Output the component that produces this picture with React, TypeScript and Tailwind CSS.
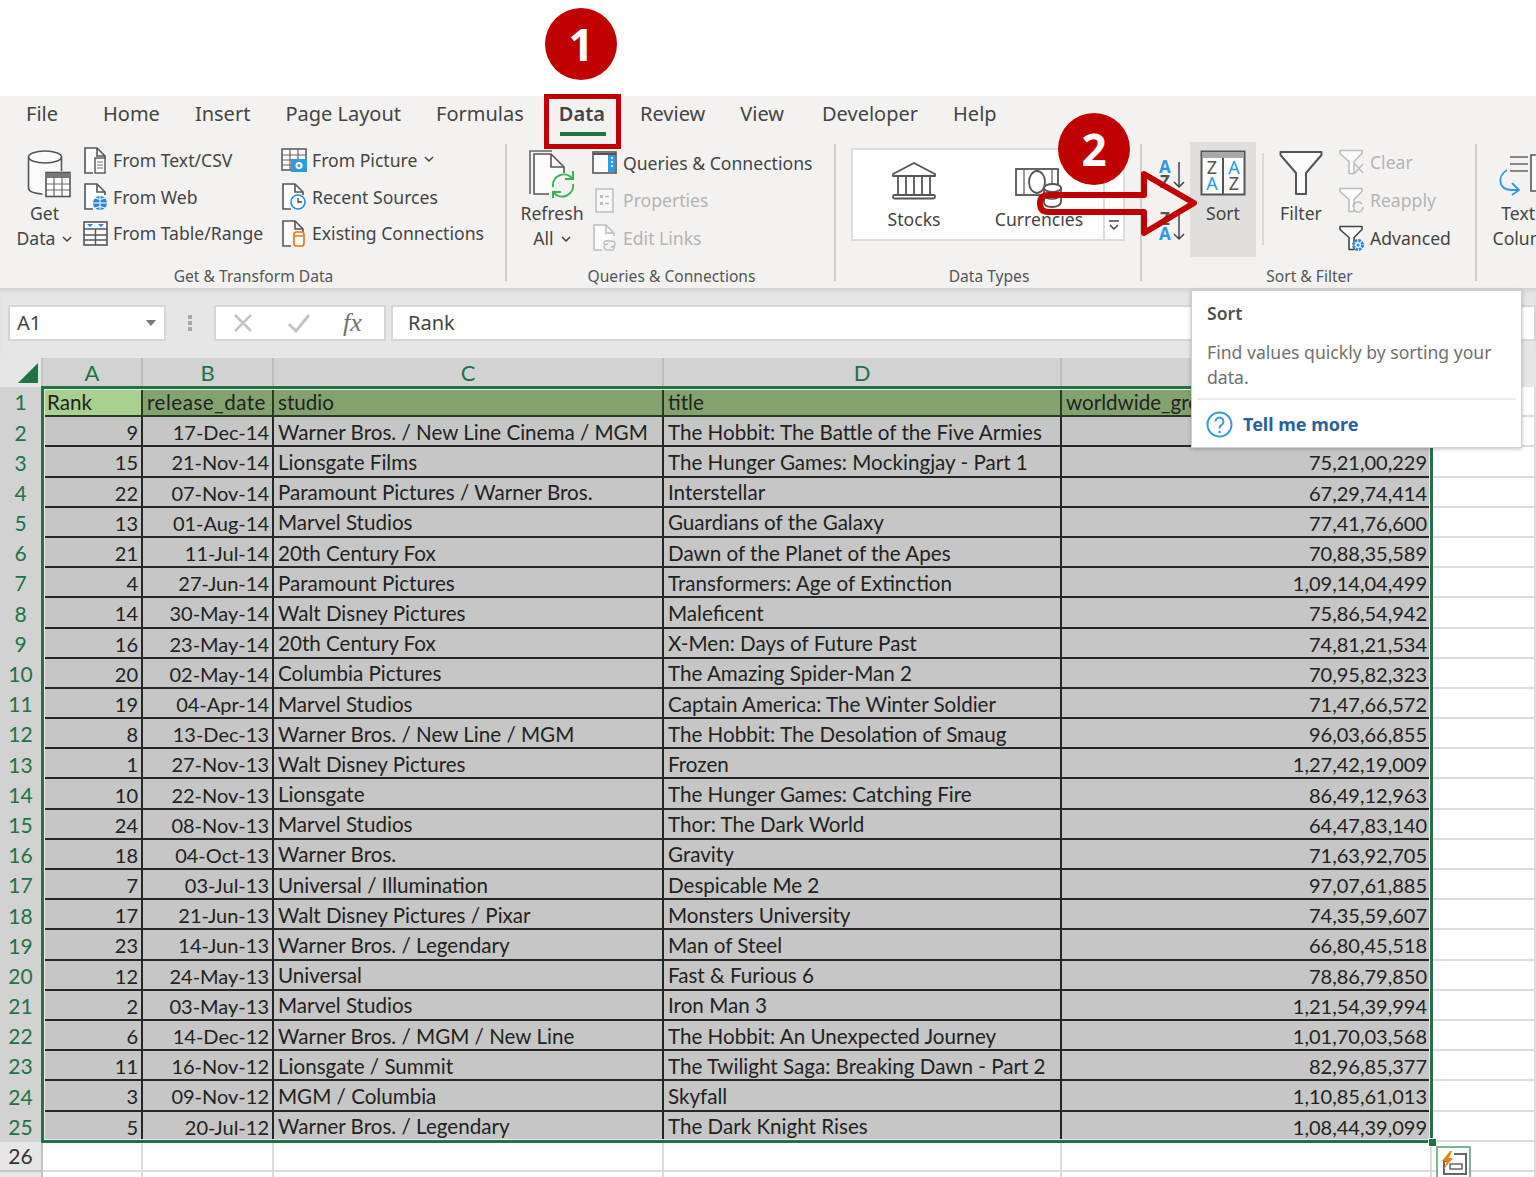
import type { ReactNode } from 'react'

const rows: [number, string, string, string, string][] = [
  [9, '17-Dec-14', 'Warner Bros. / New Line Cinema / MGM', 'The Hobbit: The Battle of the Five Armies', '95,60,19,788'],
  [15, '21-Nov-14', 'Lionsgate Films', 'The Hunger Games: Mockingjay - Part 1', '75,21,00,229'],
  [22, '07-Nov-14', 'Paramount Pictures / Warner Bros.', 'Interstellar', '67,29,74,414'],
  [13, '01-Aug-14', 'Marvel Studios', 'Guardians of the Galaxy', '77,41,76,600'],
  [21, '11-Jul-14', '20th Century Fox', 'Dawn of the Planet of the Apes', '70,88,35,589'],
  [4, '27-Jun-14', 'Paramount Pictures', 'Transformers: Age of Extinction', '1,09,14,04,499'],
  [14, '30-May-14', 'Walt Disney Pictures', 'Maleficent', '75,86,54,942'],
  [16, '23-May-14', '20th Century Fox', 'X-Men: Days of Future Past', '74,81,21,534'],
  [20, '02-May-14', 'Columbia Pictures', 'The Amazing Spider-Man 2', '70,95,82,323'],
  [19, '04-Apr-14', 'Marvel Studios', 'Captain America: The Winter Soldier', '71,47,66,572'],
  [8, '13-Dec-13', 'Warner Bros. / New Line / MGM', 'The Hobbit: The Desolation of Smaug', '96,03,66,855'],
  [1, '27-Nov-13', 'Walt Disney Pictures', 'Frozen', '1,27,42,19,009'],
  [10, '22-Nov-13', 'Lionsgate', 'The Hunger Games: Catching Fire', '86,49,12,963'],
  [24, '08-Nov-13', 'Marvel Studios', 'Thor: The Dark World', '64,47,83,140'],
  [18, '04-Oct-13', 'Warner Bros.', 'Gravity', '71,63,92,705'],
  [7, '03-Jul-13', 'Universal / Illumination', 'Despicable Me 2', '97,07,61,885'],
  [17, '21-Jun-13', 'Walt Disney Pictures / Pixar', 'Monsters University', '74,35,59,607'],
  [23, '14-Jun-13', 'Warner Bros. / Legendary', 'Man of Steel', '66,80,45,518'],
  [12, '24-May-13', 'Universal', 'Fast & Furious 6', '78,86,79,850'],
  [2, '03-May-13', 'Marvel Studios', 'Iron Man 3', '1,21,54,39,994'],
  [6, '14-Dec-12', 'Warner Bros. / MGM / New Line', 'The Hobbit: An Unexpected Journey', '1,01,70,03,568'],
  [11, '16-Nov-12', 'Lionsgate / Summit', 'The Twilight Saga: Breaking Dawn - Part 2', '82,96,85,377'],
  [3, '09-Nov-12', 'MGM / Columbia', 'Skyfall', '1,10,85,61,013'],
  [5, '20-Jul-12', 'Warner Bros. / Legendary', 'The Dark Knight Rises', '1,08,44,39,099'],
]

const tabs = ['Home', 'Insert', 'Page Layout', 'Formulas', 'Data', 'Review', 'View', 'Developer', 'Help']

const cols = ['A', 'B', 'C', 'D', 'E']
const gridCols = 'grid grid-cols-[43px_100px_131px_390px_398px_370px_104px]'

function Chevron() {
  return (
    <svg width="10" height="6" viewBox="0 0 10 6" className="inline-block ml-[7px] mb-[3px]">
      <path d="M1 1l4 4 4-4" fill="none" stroke="#444" strokeWidth="1.5" />
    </svg>
  )
}

function Doc({ children, gray }: { children?: ReactNode; gray?: boolean }) {
  const c = gray ? '#bdbdbd' : '#555'
  return (
    <svg width="25" height="27" viewBox="0 0 25 27">
      <path d="M10 26H2V1h12l8 8v3" fill="#fbfbfb" stroke={c} strokeWidth="1.6" />
      <path d="M14 1v8h8" fill="none" stroke={c} strokeWidth="1.6" />
      {children}
    </svg>
  )
}

function GetDataIcon() {
  return (
    <svg width="44" height="48" viewBox="0 0 44 48" className="ml-[9px]">
      <path d="M1 7v31q0 5 14 6h4V22h15V7z" fill="#fbfbfb" />
      <ellipse cx="18" cy="7" rx="16.5" ry="6" fill="#fbfbfb" stroke="#555" strokeWidth="1.6" />
      <path d="M1.5 7v31q0 5 14 6M34.500 7v14" fill="none" stroke="#555" strokeWidth="1.6" />
      <rect x="19" y="22.500" width="24" height="24" fill="#fff" stroke="#555" strokeWidth="1.6" />
      <path d="M19 23h24v5H19z" fill="#777" />
      <path d="M27 28v18M35 28v18M19 34h24M19 40h24" stroke="#666" strokeWidth="1.2" />
    </svg>
  )
}

function TableRangeIcon() {
  return (
    <svg width="25" height="25" viewBox="0 0 25 25">
      <rect x="1" y="1" width="23" height="23" fill="#fbfbfb" stroke="#555" strokeWidth="1.6" />
      <path d="M1 8h23M1 14h23M1 19h23M12.500 8v16" stroke="#555" strokeWidth="1.4" />
      <path d="M4 3h6l-3 3zM15 3h6l-3 3z" fill="#2b88d8" />
    </svg>
  )
}

function PictureIcon() {
  return (
    <svg width="26" height="24" viewBox="0 0 26 24">
      <rect x="1" y="1" width="24" height="21" fill="#fbfbfb" stroke="#555" strokeWidth="1.5" />
      <path d="M1 7h24M1 12h24M1 17h9M9 1v21M17 1v10" stroke="#666" strokeWidth="1.2" />
      <rect x="10" y="11" width="16" height="13" fill="#2f9ae0" />
      <circle cx="18" cy="17.500" r="3.500" fill="#fff" />
      <circle cx="18" cy="17.500" r="1.500" fill="#2f9ae0" />
    </svg>
  )
}

function RefreshIcon() {
  return (
    <svg width="46" height="48" viewBox="0 0 46 48">
      <path d="M1 44V1h22" fill="none" stroke="#666" strokeWidth="1.600" />
      <path d="M20 44H5V4h17l13 13v6" fill="#fbfbfb" stroke="#555" strokeWidth="1.600" />
      <path d="M22 4v13h13" fill="none" stroke="#555" strokeWidth="1.600" />
      <path d="M24 37a11 11 0 0 1 19-9M44 34a11 11 0 0 1-19 9" fill="none" stroke="#3fae5a" strokeWidth="2" />
      <path d="M44 21v8h-8M24 49v-7h8" fill="none" stroke="#3fae5a" strokeWidth="2" />
    </svg>
  )
}

function StocksIcon() {
  return (
    <svg width="44" height="38" viewBox="0 0 44 38">
      <path d="M22 1L1 12v2h42v-2z" fill="#fff" stroke="#555" strokeWidth="1.800" strokeLinejoin="round" />
      <path d="M6 14v18M14 14v18M22 14v18M30 14v18M38 14v18" stroke="#555" strokeWidth="1.800" />
      <rect x="1" y="33" width="42" height="3.500" rx="1.500" fill="#fff" stroke="#555" strokeWidth="1.800" />
    </svg>
  )
}

function CurrencyIcon() {
  return (
    <svg width="48" height="40" viewBox="0 0 48 40">
      <rect x="1" y="1" width="42" height="26" fill="#fff" stroke="#555" strokeWidth="1.800" />
      <path d="M9 1v26M37 1v26" stroke="#555" strokeWidth="1.200" />
      <ellipse cx="22" cy="14" rx="8" ry="11" fill="none" stroke="#555" strokeWidth="1.800" />
      <path d="M29 20v14q0 5 8 5t9-5V20z" fill="#fff" stroke="#555" strokeWidth="1.800" />
      <ellipse cx="37.500" cy="20" rx="8.500" ry="4" fill="#fff" stroke="#555" strokeWidth="1.800" />
      <path d="M29 27q1 4 8 4t9-4" fill="none" stroke="#555" strokeWidth="1.500" />
    </svg>
  )
}

function SortSmall({ first, second }: { first: string; second: string }) {
  const top = first === 'A'
  return (
    <svg width="28" height="30" viewBox="0 0 28 30" className="overflow-visible">
      <text x="7" y="13" textAnchor="middle" fontSize="17" fontWeight="700" fill={top ? '#2f9ae0' : '#555'} fontFamily="Noto Sans">
        {first}
      </text>
      <text x="7" y="28" textAnchor="middle" fontSize="17" fontWeight="700" fill={top ? '#555' : '#2f9ae0'} fontFamily="Noto Sans">
        {second}
      </text>
      <path d="M21 2v25M16 22l5 5 5-5" fill="none" stroke="#444" strokeWidth="1.500" />
    </svg>
  )
}

function SortIcon() {
  const f = { fontSize: 18, fontFamily: 'Noto Sans', textAnchor: 'middle' as const }
  return (
    <svg width="46" height="46" viewBox="0 0 46 46">
      <rect x="1.500" y="1.500" width="43" height="43" fill="#fbfbfb" stroke="#555" strokeWidth="2" />
      <rect x="2" y="2" width="42" height="6" fill="#a8a8a8" />
      <path d="M23 8v36" stroke="#555" strokeWidth="2" />
      <text x="12" y="24" {...f} fill="#555">Z</text>
      <text x="12" y="40" {...f} fill="#2f9ae0">A</text>
      <text x="34" y="24" {...f} fill="#2f9ae0">A</text>
      <text x="34" y="40" {...f} fill="#555">Z</text>
    </svg>
  )
}

function FilterIcon() {
  return (
    <svg width="44" height="46" viewBox="0 0 44 46">
      <path d="M1.500 2h41v3L27 23v21H17V23L1.500 5z" fill="#fbfbfb" stroke="#555" strokeWidth="2" strokeLinejoin="round" />
    </svg>
  )
}

function SmallFunnel({ color, children }: { color: string; children?: ReactNode }) {
  return (
    <svg width="26" height="26" viewBox="0 0 26 26">
      <path d="M1 1.500h22v3l-8 8v12h-5v-12l-9-8z" fill="#fbfbfb" stroke={color} strokeWidth="1.600" strokeLinejoin="round" />
      {children}
    </svg>
  )
}

function TextColumnsIcon() {
  return (
    <svg width="46" height="42" viewBox="0 0 46 42">
      <path d="M12 3h18M12 10h18M12 17h18" stroke="#666" strokeWidth="1.600" />
      <path d="M33 1h13v36H33z" fill="#fbfbfb" stroke="#555" strokeWidth="1.600" />
      <path d="M9 16C-1 22 0 36 14 36h6M14 29l7 7-7 5" fill="none" stroke="#2f9ae0" strokeWidth="1.800" />
    </svg>
  )
}

function BigButton({ icon, lines, chevron, className }: { icon: ReactNode; lines: string[]; chevron?: boolean; className: string }) {
  return (
    <div className={`flex flex-col items-center pt-[12px] text-[17.600px] leading-[25px] text-[#444] ${className}`}>
      <div className="h-[53px] pt-[2px] flex items-start justify-center">{icon}</div>
      {lines.map((l, i) => (
        <div key={l} className="whitespace-nowrap">
          {l}
          {chevron && i === lines.length - 1 && <Chevron />}
        </div>
      ))}
    </div>
  )
}

function SmallItem({ icon, label, gray, width, chevron, rowClass }: { icon: ReactNode; label: string; gray?: boolean; width: string; chevron?: boolean; rowClass: string }) {
  return (
    <div className={`flex items-center whitespace-nowrap text-[17.600px] ${rowClass} ${gray ? 'text-[#b4b4b4]' : 'text-[#444]'}`}>
      <div className={`flex justify-start shrink-0 ${width}`}>{icon}</div>
      {label}
      {chevron && <Chevron />}
    </div>
  )
}

function Group({ label, className, children }: { label: string; className: string; children: ReactNode }) {
  return (
    <div className={`relative flex flex-col shrink-0 h-full ${className}`}>
      <div className="flex h-[129px] overflow-hidden">{children}</div>
      <div className="h-[23px] text-center text-[15.600px] leading-[23px] text-[#555]">{label}</div>
    </div>
  )
}

export default function App() {
  return (
    <div className="relative w-[1536px] h-[1177px] overflow-hidden bg-white [font-family:'Noto_Sans',sans-serif]">
      <div className="h-[96px]" />

      {/* Ribbon */}
      <div className="h-[192px] bg-[#f3f2f1]">
        <div className="flex h-[40px] items-center pb-[4px] pl-[26px] text-[20px] text-[#444]">
          <div className="mr-[45px]">File</div>
          <div className="flex gap-[35px]">
            {tabs.map((t) => (
              <div key={t} className={t === 'Data' ? 'font-semibold' : t === 'Developer' ? 'ml-[3px]' : ''}>
                {t}
              </div>
            ))}
          </div>
        </div>
        <div className="flex h-[152px] overflow-hidden">
          <Group label="Get & Transform Data" className="w-[507px]">
            <BigButton icon={<GetDataIcon />} lines={['Get', 'Data']} chevron className="w-[65px] ml-[12px]" />
            <div className="ml-[6px] pt-[6px] w-[198px]">
              <SmallItem rowClass="h-[36.500px]" width="w-[30px]" label="From Text/CSV" icon={<Doc><rect x="12" y="11" width="10" height="15" fill="#fbfbfb" stroke="#555" strokeWidth="1.400" /><path d="M14 15h6M14 18h6M14 21h6" stroke="#777" /></Doc>} />
              <SmallItem rowClass="h-[36.500px]" width="w-[30px]" label="From Web" icon={<Doc><circle cx="17" cy="20" r="7" fill="#2b88d8" /><path d="M10 20h14M17 13v14M12 15q5 3 10 0M12 25q5-3 10 0" stroke="#fff" fill="none" /></Doc>} />
              <SmallItem rowClass="h-[36.500px]" width="w-[30px]" label="From Table/Range" icon={<TableRangeIcon />} />
            </div>
            <div className="pt-[6px]">
              <SmallItem rowClass="h-[36.500px]" width="w-[31px]" label="From Picture" chevron icon={<PictureIcon />} />
              <SmallItem rowClass="h-[36.500px]" width="w-[31px]" label="Recent Sources" icon={<Doc><circle cx="17" cy="19" r="7" fill="#fff" stroke="#2b88d8" strokeWidth="1.600" /><path d="M17 15v4h4" fill="none" stroke="#444" strokeWidth="1.400" /></Doc>} />
              <SmallItem rowClass="h-[36.500px]" width="w-[31px]" label="Existing Connections" icon={<Doc><rect x="13" y="12" width="10" height="14" rx="2.500" fill="#fff" stroke="#e67a1c" strokeWidth="1.700" /><path d="M13 16h10" stroke="#e67a1c" strokeWidth="1.500" /></Doc>} />
            </div>
            <div className="absolute right-0 top-[8px] h-[137px] w-[2px] bg-[#cfcdcb]" />
          </Group>

          <Group label="Queries & Connections" className="w-[329px]">
            <BigButton icon={<RefreshIcon />} lines={['Refresh', 'All']} chevron className="w-[70px] ml-[10px]" />
            <div className="pt-[8px] ml-[5px]">
              <SmallItem rowClass="h-[37.500px]" width="w-[31px]" label="Queries & Connections" icon={<svg width="25" height="23" viewBox="0 0 25 23"><rect x="1" y="1" width="23" height="21" fill="#fbfbfb" stroke="#555" strokeWidth="1.600" /><path d="M1 3h23" stroke="#555" strokeWidth="2" /><rect x="16" y="4" width="7" height="17" fill="#2f9ae0" /><path d="M19 7h2M19 11h2M19 15h2" stroke="#fff" strokeWidth="1.500" /></svg>} />
              <SmallItem gray rowClass="h-[37.500px]" width="w-[31px]" label="Properties" icon={<svg width="19" height="25" viewBox="0 0 19 25" className="ml-[3px]"><rect x="1" y="1" width="17" height="23" fill="#f7f7f7" stroke="#bdbdbd" strokeWidth="1.500" /><path d="M5 7h3v3H5zM5 14h3v3H5z" fill="#bdbdbd" /><path d="M10 8.500h4M10 15.500h4" stroke="#bdbdbd" strokeWidth="1.500" /></svg>} />
              <SmallItem gray rowClass="h-[37.500px]" width="w-[31px]" label="Edit Links" icon={<Doc gray><path d="M12 20q0-4 4-3h3q4 0 4 3t-4 3M16 20q-4 0-4 3t4 3h3q4 0 3-3" fill="none" stroke="#bdbdbd" strokeWidth="1.500" /></Doc>} />
            </div>
            <div className="absolute right-0 top-[8px] h-[137px] w-[2px] bg-[#cfcdcb]" />
          </Group>

          <Group label="Data Types" className="w-[306px]">
            <div className="ml-[15px] mt-[12px] h-[93px] w-[274px] shrink-0 bg-white border-2 border-[#dedddc] flex">
              <div className="w-[122px] flex flex-col items-center pt-[12px] text-[17.600px] text-[#444]">
                <StocksIcon />
                <div className="mt-[6px]">Stocks</div>
              </div>
              <div className="w-[128px] flex flex-col items-center pt-[18px] text-[17.600px] text-[#444]">
                <CurrencyIcon />
                <div className="-mt-[2px]">Currencies</div>
              </div>
              <div className="flex-1 border-l-2 border-[#dedddc] flex flex-col justify-end items-center">
                <div className="h-[30px] w-full border-t-2 border-[#dedddc] flex items-center justify-center">
                  <svg width="12" height="12" viewBox="0 0 12 12"><path d="M1 2h10M2 6l4 4 4-4" fill="none" stroke="#444" strokeWidth="1.500" /></svg>
                </div>
              </div>
            </div>
            <div className="absolute right-0 top-[8px] h-[137px] w-[2px] bg-[#cfcdcb]" />
          </Group>

          <Group label="Sort & Filter" className="w-[335px]">
            <div className="w-[48px] pl-[16px] pt-[24px] flex flex-col gap-[22px] shrink-0">
              <SortSmall first="A" second="Z" />
              <SortSmall first="Z" second="A" />
            </div>
            <div className="w-[66px] h-[115px] mt-[6px] shrink-0 bg-[#e1dfdd]">
              <BigButton icon={<SortIcon />} lines={['Sort']} className="w-full !pt-[6px]" />
            </div>
            <div className="ml-[6px] mt-[17px] h-[92px] w-[2px] bg-[#dcdad8]" />
            <BigButton icon={<FilterIcon />} lines={['Filter']} className="w-[60px] ml-[7px]" />
            <div className="ml-[8px] pt-[7px]">
              <SmallItem gray rowClass="h-[38px]" width="w-[31px]" label="Clear" icon={<SmallFunnel color="#bdbdbd"><path d="M16 15l8 9M24 15l-8 9" stroke="#bdbdbd" strokeWidth="1.500" /></SmallFunnel>} />
              <SmallItem gray rowClass="h-[38px]" width="w-[31px]" label="Reapply" icon={<SmallFunnel color="#bdbdbd"><path d="M14 20a5 5 0 0 1 9-3M24 20a5 5 0 0 1-9 3" fill="none" stroke="#bdbdbd" strokeWidth="1.500" /></SmallFunnel>} />
              <SmallItem rowClass="h-[38px]" width="w-[31px]" label="Advanced" icon={<SmallFunnel color="#444"><circle cx="19" cy="20" r="4.500" fill="#fff" stroke="#2b88d8" strokeWidth="3" strokeDasharray="2.500 1" /><circle cx="19" cy="20" r="1.500" fill="#2b88d8" /></SmallFunnel>} />
            </div>
            <div className="absolute right-0 top-[8px] h-[137px] w-[2px] bg-[#cfcdcb]" />
          </Group>

          <div className="flex-1 overflow-hidden">
            <div className="flex flex-col items-center w-[104px] pt-[18px] text-[17.600px] leading-[25px] text-[#444]">
              <div className="h-[47px] w-full pl-[21px]"><TextColumnsIcon /></div>
              <div className="whitespace-nowrap">Text to</div>
              <div>Columns</div>
            </div>
          </div>
        </div>
      </div>

      {/* Formula bar */}
      <div className="h-[70px] bg-[#e6e6e6] flex items-start pt-[17px] pl-[8px] shadow-[inset_0_5px_4px_-2px_#d2d2d2]">
        <div className="w-[158px] h-[36px] bg-white border-2 border-[#d6d6d6] flex items-center justify-between pl-[7px] pr-[8px] text-[20px] text-[#444]">
          A1
          <svg width="10" height="6" viewBox="0 0 10 6"><path d="M0 0h10L5 6z" fill="#777" /></svg>
        </div>
        <div className="w-[48px] h-[36px] flex flex-col items-center justify-center gap-[2px]">
          <div className="w-[4px] h-[4px] bg-[#a8a8a8]" />
          <div className="w-[4px] h-[4px] bg-[#a8a8a8]" />
          <div className="w-[4px] h-[4px] bg-[#a8a8a8]" />
        </div>
        <div className="w-[172px] h-[36px] bg-white border-2 border-[#d6d6d6] flex items-center pl-[16px]">
          <svg width="22" height="20" viewBox="0 0 22 20"><path d="M3 2l16 16M19 2L3 18" stroke="#c4c4c4" strokeWidth="2.500" /></svg>
          <svg width="24" height="20" viewBox="0 0 24 20" className="ml-[33px]"><path d="M2 11l7 7L22 2" fill="none" stroke="#c4c4c4" strokeWidth="3" /></svg>
          <div className="ml-[32px] text-[26px] italic leading-none text-[#707070] [font-family:'Liberation_Serif',serif]">fx</div>
        </div>
        <div className="ml-[5px] flex-1 h-[36px] bg-white border-2 border-[#d6d6d6] flex items-center pl-[15px] text-[20px] text-[#444]">Rank</div>
      </div>

      {/* Sheet */}
      <div className="[font-family:'Lato',sans-serif] text-[20.600px] text-[#222]">
        <div className={`${gridCols} h-[29px] text-[#217346]`}>
          <div className="relative bg-[#e6e6e6] border-r-2 border-[#c4c4c4]">
            <svg width="20" height="20" viewBox="0 0 20 20" className="mt-[5px] ml-[18px]"><path d="M20 0v20H0z" fill="#217346" /></svg>
          </div>
          {cols.map((c) => (
            <div key={c} className="bg-[#d2d2d2] border-r-2 border-[#bdbdbd] flex items-center justify-center leading-none text-[22px]">
              {c}
            </div>
          ))}
          <div className="bg-[#e6e6e6]" />
        </div>
        <div className={`${gridCols} auto-rows-[30.200px]`}>
          <div className="bg-[#d2d2d2] flex items-center justify-center text-[#217346] text-[21px] border-r-2 border-[#bdbdbd]">1</div>
          {['Rank', 'release_date', 'studio', 'title', 'worldwide_gross'].map((h, i) => (
            <div key={h} className={`flex items-center overflow-hidden whitespace-nowrap pl-[4px] pt-[2px] border-r-2 border-b-2 border-[#2a3a22] ${i === 0 ? 'bg-[#a9d08e]' : 'bg-[#84a26f]'} ${i === 1 ? 'tracking-[0.5px]' : ''}`}>
              {h}
            </div>
          ))}
          <div className="border-r-2 border-b-2 border-[#dcdcdc]" />
          {rows.map((r, i) => (
            <div key={r[1]} className="contents">
              <div className="bg-[#d2d2d2] flex items-center justify-center text-[#217346] text-[21px] border-r-2 border-[#bdbdbd]">{i + 2}</div>
              <div className="bg-[#c6c6c6] flex items-center justify-end pr-[3px] pt-[2px] border-r-2 border-b-2 border-[#262626] text-[20px]">{r[0]}</div>
              <div className="bg-[#c6c6c6] flex items-center justify-end pr-[3px] pt-[2px] border-r-2 border-b-2 border-[#262626] text-[20px]">{r[1]}</div>
              <div className="bg-[#c6c6c6] flex items-center pl-[4px] pt-[2px] border-r-2 border-b-2 border-[#262626] whitespace-nowrap">{r[2]}</div>
              <div className="bg-[#c6c6c6] flex items-center pl-[4px] pt-[2px] border-r-2 border-b-2 border-[#262626] whitespace-nowrap">{r[3]}</div>
              <div className="bg-[#c6c6c6] flex items-center justify-end pr-[3px] pt-[2px] border-r-2 border-b-2 border-[#262626] text-[20px]">{r[4]}</div>
              <div className="border-r-2 border-b-2 border-[#dcdcdc]" />
            </div>
          ))}
          {['26', ''].map((n) => (
            <div key={n} className="contents">
              <div className="bg-[#e6e6e6] flex items-center justify-center text-[#333] text-[21px] border-r-2 border-b-2 border-[#c4c4c4]">{n}</div>
              {[0, 1, 2, 3, 4, 5].map((c) => (
                <div key={c} className="border-r-2 border-b-2 border-[#dcdcdc]" />
              ))}
            </div>
          ))}
        </div>
      </div>

      {/* Selection outline */}
      <div className="absolute left-[41px] top-[386px] w-[1392px] h-[757px] border-[3px] border-[#217346] shadow-[inset_0_0_0_1px_#e8e8e8]" />
      <div className="absolute left-[1428px] top-[1138px] w-[7px] h-[7px] bg-[#217346] border border-white box-content" />

      {/* Quick analysis */}
      <div className="absolute left-[1436px] top-[1146px] w-[35px] h-[36px] bg-white border-2 border-[#7fb394] pl-[3px] pt-[3px]">
        <svg width="26" height="24" viewBox="0 0 26 24">
          <path d="M8 10H3v13h22V3H13" fill="none" stroke="#666" strokeWidth="2" />
          <rect x="9" y="13" width="12" height="5" fill="#fff" stroke="#666" strokeWidth="1.500" />
          <path d="M9 0L1 10h5l-3 8 9-11H8l3-7z" fill="#e8831a" />
        </svg>
      </div>

      {/* Tooltip */}
      <div className="absolute left-[1191px] top-[290px] w-[331px] h-[158px] bg-white border border-[#cfcfcf] shadow-[0_1px_4px_rgba(0,0,0,0.25)] px-[15px]">
        <div className="pt-[9px] text-[17.600px] font-semibold leading-[26px] text-[#505050]">Sort</div>
        <div className="mt-[14px] text-[17.600px] leading-[25px] text-[#707070]">Find values quickly by sorting your data.</div>
        <div className="mt-[8px] -mx-[10px] h-[2px] bg-[#ececec]" />
        <div className="mt-[11px] -ml-[1px] flex items-center gap-[10px] text-[18px] font-bold text-[#2b5f9e]">
          <svg width="27" height="27" viewBox="0 0 27 27">
            <circle cx="13.500" cy="13.500" r="12" fill="none" stroke="#3a9ad9" strokeWidth="2" />
            <path d="M9.500 10.500a4 4 0 1 1 6 3.500q-2 1-2 3.500" fill="none" stroke="#3a9ad9" strokeWidth="2" />
            <circle cx="13.500" cy="21" r="1.300" fill="#3a9ad9" />
          </svg>
          Tell me more
        </div>
      </div>

      {/* Callouts */}
      <div className="absolute left-[544px] top-[94px] w-[77px] h-[55px] border-[5px] border-[#c00000]" />
      <div className="absolute left-[560px] top-[132px] w-[46px] h-[4px] bg-[#217346]" />
      <div className="absolute left-[545px] top-[8px] w-[72px] h-[72px] rounded-full bg-[#c00000] flex items-center justify-center text-white text-[44px] font-bold">1</div>
      <div className="absolute left-[1058px] top-[113px] w-[72px] h-[72px] rounded-full bg-[#c00000] flex items-center justify-center text-white text-[44px] font-bold">2</div>
      <svg width="180" height="80" viewBox="0 0 180 80" className="absolute left-[1030px] top-[165px]">
        <path d="M19 30h95V9l50 29-50 30V47H19q-9 0-9-8.500T19 30z" fill="none" stroke="#c00000" strokeWidth="6" strokeLinejoin="round" />
      </svg>
    </div>
  )
}
